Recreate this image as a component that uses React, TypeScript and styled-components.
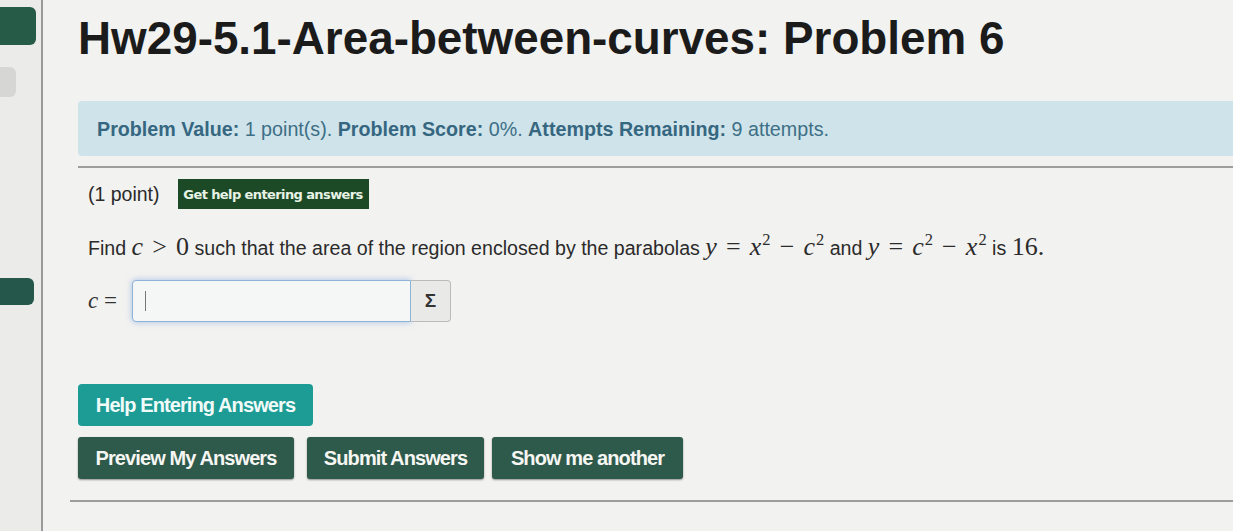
import React from "react";
import styled, { createGlobalStyle } from "styled-components";

const Global = createGlobalStyle`
  html, body { margin: 0; padding: 0; background: #f1f1ef; }
  body { font-family: "Liberation Sans", Arial, Helvetica, sans-serif; color: #222; }
  #root { height: 531px; overflow: hidden; }
`;

const Page = styled.div`
  display: flex;
  height: 531px;
  width: 1233px;
  background: #f2f2f0;
`;

const Sidebar = styled.aside`
  width: 43px;
  flex: none;
  background: #ebebea;
  border-right: 2px solid #9a9a9a;
  display: flex;
  flex-direction: column;
  padding-top: 7px;
  box-sizing: border-box;
`;

const SideBlock = styled.div<{ $w: number; $h: number; $color: string; $mt: number }>`
  width: ${(p) => p.$w}px;
  height: ${(p) => p.$h}px;
  background: ${(p) => p.$color};
  margin-top: ${(p) => p.$mt}px;
  border-radius: 0 6px 6px 0;
`;

const Main = styled.main`
  flex: 1;
  padding-left: 35px;
  display: flex;
  flex-direction: column;
  min-width: 0;
`;

const Title = styled.h1`
  margin: 13px 0 0 0;
  font-size: 45.8px;
  font-weight: 700;
  line-height: 52px;
  color: #1b1b1b;
`;

const InfoBox = styled.div`
  margin-top: 36px;
  height: 55px;
  background: #cfe3ea;
  border-radius: 4px 0 0 4px;
  display: flex;
  align-items: center;
  padding: 2px 0 0 19px;
  box-sizing: border-box;
  font-size: 19.7px;
  color: #3d6f86;
  white-space: nowrap;
`;

const Strong = styled.b`
  font-weight: 700;
  color: #366781;
`;

const Rule = styled.hr<{ $mt: number; $ml?: number }>`
  margin: ${(p) => p.$mt}px 0 0 ${(p) => p.$ml ?? 0}px;
  border: none;
  border-top: 2px solid #9d9d9d;
`;

const Problem = styled.div`
  padding-left: 10px;
  display: flex;
  flex-direction: column;
`;

const PointRow = styled.div`
  margin-top: 11px;
  display: flex;
  align-items: center;
  gap: 18px;
  font-size: 19.5px;
  color: #2a2a2a;
`;

const HelpBadge = styled.span`
  background: #1d4a26;
  color: #e8f3e6;
  font-family: "DejaVu Sans", Verdana, sans-serif;
  font-weight: 700;
  font-size: 13px;
  letter-spacing: -0.6px;
  height: 30px;
  width: 191px;
  box-sizing: border-box;
  display: flex;
  align-items: center;
  justify-content: center;
  white-space: nowrap;
`;

const Statement = styled.p`
  margin: 25px 0 0 0;
  font-size: 19.6px;
  line-height: 28px;
  color: #2b2b2b;
  white-space: nowrap;
`;

const MathSpan = styled.span`
  font-family: "Liberation Serif", "Times New Roman", serif;
  font-size: 26px;
  line-height: 0;
`;

const Op = styled.span`
  margin: 0 0.1em;
`;

const Sup = styled.sup`
  font-size: 16.5px;
  vertical-align: 10px;
  line-height: 0;
  margin-left: 1px;
`;

const Var = styled.i`
  font-family: "Liberation Serif", "Times New Roman", serif;
  font-style: italic;
`;

const AnswerRow = styled.div`
  margin-top: 18px;
  display: flex;
  align-items: center;
`;

const Label = styled.span`
  font-family: "Liberation Serif", "Times New Roman", serif;
  font-size: 23px;
  width: 44px;
  color: #333;
`;

const InputWrap = styled.div`
  display: flex;
  align-items: stretch;
  height: 42px;
`;

const Input = styled.div`
  width: 279px;
  box-sizing: border-box;
  border: 1px solid #8fb3d6;
  border-radius: 4px 0 0 4px;
  background: #f5f6f6;
  box-shadow: 0 0 6px rgba(100, 150, 220, 0.55);
  display: flex;
  align-items: center;
  padding-left: 12px;
`;

const Caret = styled.span`
  width: 1px;
  height: 20px;
  background: #777;
`;

const SigmaBtn = styled.div`
  width: 40px;
  box-sizing: border-box;
  border: 1px solid #bbb;
  border-left: none;
  border-radius: 0 4px 4px 0;
  background: #e9e9e8;
  display: flex;
  align-items: center;
  justify-content: center;
  font-size: 19px;
  font-weight: 700;
  color: #333;
`;

const HelpButton = styled.button`
  margin-top: 62px;
  align-self: flex-start;
  height: 42px;
  width: 235px;
  border: none;
  border-radius: 4px;
  background: #1d9c95;
  color: #f1fbf9;
  font-family: "Liberation Sans", Arial, sans-serif;
  font-weight: 700;
  font-size: 20px;
  letter-spacing: -0.9px;
  cursor: pointer;
`;

const ButtonRow = styled.div`
  margin-top: 11px;
  display: flex;
  gap: 10px;
`;

const ActionButton = styled.button<{ $w: number; $ml?: number }>`
  height: 42px;
  width: ${(p) => p.$w}px;
  margin-left: ${(p) => p.$ml ?? 0}px;
  border: none;
  border-radius: 3px;
  background: #2e5a4c;
  color: #f6f6f2;
  font-family: "Liberation Sans", Arial, sans-serif;
  font-weight: 700;
  font-size: 20px;
  letter-spacing: -0.9px;
  box-shadow: 0 1px 2px rgba(0, 0, 0, 0.4);
  cursor: pointer;
`;

export default function App() {
  return (
    <>
      <Global />
      <Page>
        <Sidebar>
          <SideBlock $w={36} $h={38} $color="#255b47" $mt={0} />
          <SideBlock $w={16} $h={30} $color="#d6d6d5" $mt={22} />
          <SideBlock $w={34} $h={27} $color="#25574a" $mt={181} />
        </Sidebar>
        <Main>
          <Title>Hw29-5.1-Area-between-curves: Problem 6</Title>
          <InfoBox>
            <Strong>Problem Value:</Strong>&nbsp;1 point(s).&nbsp;<Strong>Problem Score:</Strong>&nbsp;0%.&nbsp;
            <Strong>Attempts Remaining:</Strong>&nbsp;9 attempts.
          </InfoBox>
          <Rule $mt={10} />
          <Problem>
            <PointRow>
              <span>(1 point)</span>
              <HelpBadge>Get help entering answers</HelpBadge>
            </PointRow>
            <Statement>
              Find{" "}
              <MathSpan>
                <Var>c</Var> <Op>&gt;</Op> 0
              </MathSpan>{" "}
              such that the area of the region enclosed by the parabolas{" "}
              <MathSpan>
                <Var>y</Var> <Op>=</Op> <Var>x</Var>
                <Sup>2</Sup> <Op>−</Op> <Var>c</Var>
                <Sup>2</Sup>
              </MathSpan>{" "}
              and{" "}
              <MathSpan>
                <Var>y</Var> <Op>=</Op> <Var>c</Var>
                <Sup>2</Sup> <Op>−</Op> <Var>x</Var>
                <Sup>2</Sup>
              </MathSpan>{" "}
              is <MathSpan>16.</MathSpan>
            </Statement>
            <AnswerRow>
              <Label>
                <Var>c</Var> =
              </Label>
              <InputWrap>
                <Input>
                  <Caret />
                </Input>
                <SigmaBtn>Σ</SigmaBtn>
              </InputWrap>
            </AnswerRow>
          </Problem>
          <HelpButton>Help Entering Answers</HelpButton>
          <ButtonRow>
            <ActionButton $w={216}>Preview My Answers</ActionButton>
            <ActionButton $w={177} $ml={3}>Submit Answers</ActionButton>
            <ActionButton $w={191} $ml={-2}>Show me another</ActionButton>
          </ButtonRow>
          <Rule $mt={21} $ml={-8} />
        </Main>
      </Page>
    </>
  );
}
